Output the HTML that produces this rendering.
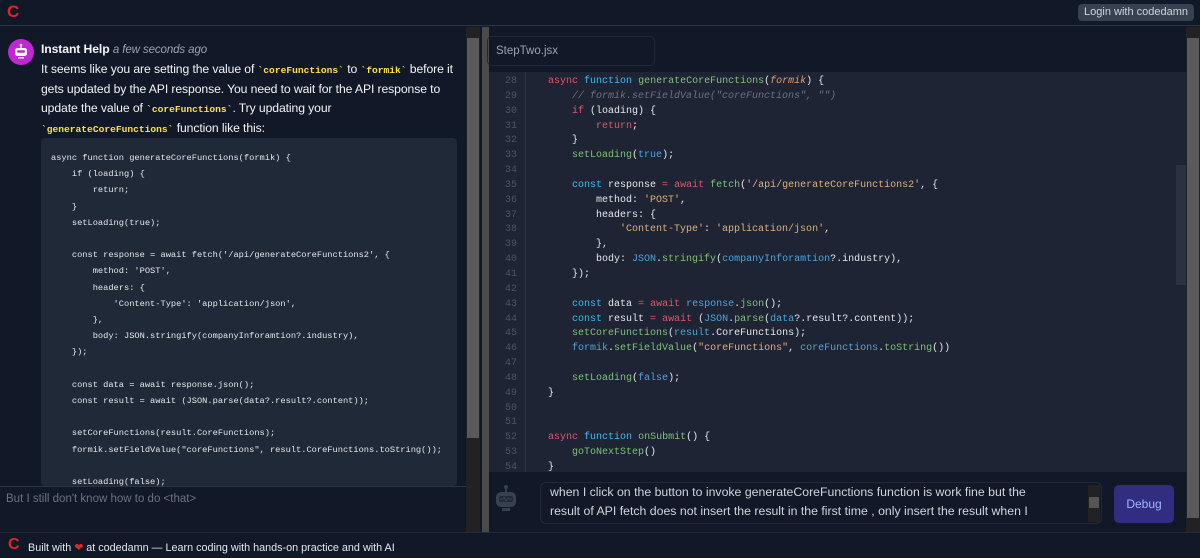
<!DOCTYPE html>
<html><head><meta charset="utf-8"><style>
*{box-sizing:border-box;margin:0;padding:0}
body{width:1200px;height:558px;overflow:hidden;background:#111827;font-family:"Liberation Sans",sans-serif;position:relative;color:#e5e7eb}
.abs{position:absolute}
.top{left:0;top:0;width:1200px;height:26px;background:#111827;border-bottom:1px solid #2a3444}
.login{right:6px;top:4px;height:17px;padding:0 6px;background:#374151;border-radius:4px;font-size:11px;line-height:17px;color:#d1d5db}
.thumb{background:#5a5a5a}
.msg{left:41px;top:40px;width:424px;font-size:12.2px;line-height:19px;color:#f3f4f6;letter-spacing:-0.1px}
.msg code{font-family:"Liberation Mono",monospace;color:#fde047;font-size:9.6px;font-weight:bold;letter-spacing:0}
.cb{left:41px;top:138px;width:416px;height:348px;background:#1f2937;border-radius:4px;overflow:hidden}
.cb pre{font-family:"Liberation Mono",monospace;font-size:8.7px;line-height:16.2px;color:#e5e7eb;position:absolute;left:10px;top:12px}
.ed pre{font-family:"Liberation Mono",monospace;font-size:10px;line-height:14.85px;color:#e5e7eb;position:absolute}
.k{color:#e0556b}.f{color:#38bdf8}.g{color:#7ec27a}.s{color:#e0b07a}.c{color:#6b7280;font-style:italic}.b{color:#4fa3e0}.i{color:#e0a06b;font-style:italic}
</style></head><body>
<div class="abs top"></div>
<div class="abs" style="left:7px;top:2px;color:#dc2626;font-weight:bold;font-size:17px">C</div>
<div class="abs login">Login with codedamn</div>

<div class="abs" style="left:8px;top:39px;width:26px;height:26px;border-radius:50%;background:#c026d3"></div>
<svg class="abs" style="left:12px;top:42px" width="18" height="20" viewBox="0 0 18 20"><circle cx="9" cy="3" r="1.3" fill="#fff"/><rect x="8.4" y="3" width="1.2" height="3" fill="#fff"/><rect x="3" y="6" width="12" height="8" rx="2.5" fill="#fff"/><rect x="5" y="8.3" width="8" height="2.5" rx="1" fill="#c026d3"/><rect x="6" y="15" width="6" height="1.5" fill="#fff"/></svg>
<div class="abs msg"><b>Instant Help</b> <i style="color:#9ca3af;font-size:11.5px">a few seconds ago</i><br>It seems like you are setting the value of <code>`coreFunctions`</code> to <code>`formik`</code> before it gets updated by the API response. You need to wait for the API response to update the value of <code>`coreFunctions`</code>. Try updating your <code>`generateCoreFunctions`</code> function like this:</div>
<div class="abs cb"><pre>async function generateCoreFunctions(formik) {
    if (loading) {
        return;
    }
    setLoading(true);

    const response = await fetch('/api/generateCoreFunctions2', {
        method: 'POST',
        headers: {
            'Content-Type': 'application/json',
        },
        body: JSON.stringify(companyInforamtion?.industry),
    });

    const data = await response.json();
    const result = await (JSON.parse(data?.result?.content));

    setCoreFunctions(result.CoreFunctions);
    formik.setFieldValue("coreFunctions", result.CoreFunctions.toString());

    setLoading(false);</pre></div>
<div class="abs" style="left:0;top:486px;width:466px;height:46px;background:#111827;border-top:1px solid #2a3444"></div>
<div class="abs" style="left:6px;top:493px;font-size:11.5px;color:#6b7280">But I still don't know how to do &lt;that&gt;</div>
<div class="abs" style="left:466px;top:27px;width:14px;height:505px;background:#222"></div>
<div class="abs thumb" style="left:467px;top:38px;width:12px;height:400px"></div>

<div class="abs" style="left:482px;top:27px;width:704px;height:505px;background:#111827"></div>
<div class="abs" style="left:482px;top:27px;width:7px;height:505px;background:#4a4a4a"></div>
<div class="abs" style="left:487px;top:36px;width:168px;height:30px;border:1px solid #1f2937;border-radius:5px;font-size:11.5px;color:#9ca3af;padding:8px 0 0 8px">StepTwo.jsx</div>
<div class="abs ed" style="left:489px;top:72px;width:697px;height:400px;background:#1e2433;overflow:hidden">
<div class="abs" style="left:36px;top:0;width:1px;height:400px;background:#2c3444"></div>
<div class="abs" style="right:0;top:93px;width:10px;height:120px;background:#2a3242"></div>
<pre style="left:6px;top:3px;color:#4b5563;text-align:right;width:22px">28
29
30
31
32
33
34
35
36
37
38
39
40
41
42
43
44
45
46
47
48
49
50
51
52
53
54</pre>
<pre style="left:59px;top:3px"><span class="k">async</span> <span class="f">function</span> <span class="g">generateCoreFunctions</span>(<span class="i">formik</span>) {
    <span class="c">// formik.setFieldValue("coreFunctions", "")</span>
    <span class="k">if</span> (loading) {
        <span class="k">return</span>;
    }
    <span class="g">setLoading</span>(<span class="b">true</span>);

    <span class="f">const</span> response <span class="k">=</span> <span class="k">await</span> <span class="g">fetch</span>(<span class="s">'/api/generateCoreFunctions2'</span>, {
        method: <span class="s">'POST'</span>,
        headers: {
            <span class="s">'Content-Type'</span>: <span class="s">'application/json'</span>,
        },
        body: <span class="b">JSON</span>.<span class="g">stringify</span>(<span class="b">companyInforamtion</span>?.industry),
    });

    <span class="f">const</span> data <span class="k">=</span> <span class="k">await</span> <span class="b">response</span>.<span class="g">json</span>();
    <span class="f">const</span> result <span class="k">=</span> <span class="k">await</span> (<span class="b">JSON</span>.<span class="g">parse</span>(<span class="b">data</span>?.result?.content));
    <span class="g">setCoreFunctions</span>(<span class="b">result</span>.CoreFunctions);
    <span class="b">formik</span>.<span class="g">setFieldValue</span>(<span class="s">"coreFunctions"</span>, <span class="b">coreFunctions</span>.<span class="g">toString</span>())

    <span class="g">setLoading</span>(<span class="b">false</span>);
}


<span class="k">async</span> <span class="f">function</span> <span class="g">onSubmit</span>() {
    <span class="g">goToNextStep</span>()
}</pre>
</div>
<svg class="abs" style="left:491px;top:484px" width="30" height="30" viewBox="0 0 30 30"><circle cx="15" cy="3" r="2" fill="#374151"/><rect x="14" y="4" width="2" height="4" fill="#374151"/><rect x="5" y="8" width="20" height="15" rx="5" fill="#374151"/><rect x="8" y="12" width="14" height="6" rx="2" fill="#1f2937"/><polyline points="9,15 12,15 13,13 15,17 17,14 18,15 21,15" fill="none" stroke="#374151" stroke-width="1"/><rect x="11" y="24" width="8" height="3" fill="#374151"/></svg>
<div class="abs" style="left:540px;top:482px;width:562px;height:42px;border:1px solid #1f2937;border-radius:6px;background:#111827"></div>
<div class="abs" style="left:550px;top:483px;width:540px;font-size:12.3px;line-height:19px;color:#d1d5db;white-space:nowrap;overflow:hidden">when I click on the button to invoke generateCoreFunctions function is work fine but the<br>result of API fetch does not insert the result in the first time , only insert the result when I</div>
<div class="abs" style="left:1088px;top:485px;width:12px;height:37px;background:#222"></div>
<div class="abs" style="left:1089px;top:497px;width:10px;height:11px;background:#555"></div>
<div class="abs" style="left:1114px;top:485px;width:60px;height:38px;background:#312e81;border-radius:5px;font-size:12px;color:#a5b4fc;text-align:center;line-height:38px">Debug</div>
<div class="abs" style="left:1186px;top:27px;width:14px;height:505px;background:#222"></div>
<div class="abs thumb" style="left:1187px;top:38px;width:12px;height:480px"></div>

<div class="abs" style="left:0;top:532px;width:1200px;height:26px;background:#111827;border-top:1px solid #1f2937"></div>
<div class="abs" style="left:8px;top:536px;color:#dc2626;font-weight:bold;font-size:16px">C</div>
<div class="abs" style="left:28px;top:541px;font-size:10.8px;color:#e5e7eb">Built with <span style="color:#dc2626">❤</span> at codedamn — Learn coding with hands-on practice and with AI</div>
</body></html>
